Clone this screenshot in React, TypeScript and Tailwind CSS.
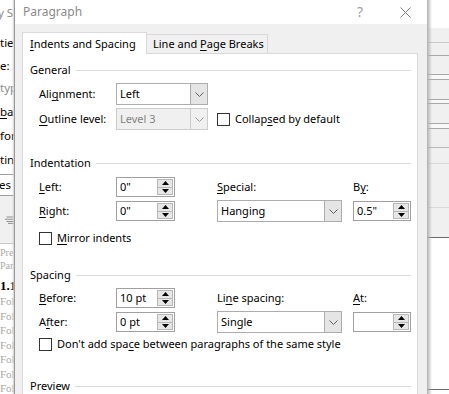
import React from "react";

const U = ({ children }: { children: React.ReactNode }) => (
  <span className="underline underline-offset-[2px] decoration-[1px]">{children}</span>
);

const Chevron = ({ color = "#606060" }: { color?: string }) => (
  <svg width="9" height="5" viewBox="0 0 9 5">
    <polyline points="0.5,0.5 4.5,4.5 8.5,0.5" fill="none" stroke={color} strokeWidth="1" />
  </svg>
);

const Select = ({
  value,
  width,
  disabled = false,
}: {
  value: string;
  width: string;
  disabled?: boolean;
}) => (
  <div
    className={`${width} h-[22px] flex border ${
      disabled ? "border-[#cccccc] bg-[#f0f0f0] text-[#838383]" : "border-[#adadad] bg-white text-black"
    }`}
  >
    <div className="flex-1 flex items-center pl-[3px]">{value}</div>
    <div
      className={`w-[17px] flex items-center justify-center border-l ${
        disabled ? "border-[#cccccc] bg-[#f0f0f0]" : "border-[#adadad] bg-[#e5e5e5]"
      }`}
    >
      <Chevron color={disabled ? "#9a9a9a" : "#606060"} />
    </div>
  </div>
);

const Spin = ({ value, width }: { value: string; width: string }) => (
  <div className={`${width} h-[20px] flex border border-[#a0a0a0] bg-white`}>
    <div className="flex-1 flex items-center pl-[3px]">{value}</div>
    <div className="w-[16px] my-px mr-px flex flex-col border border-[#b8b8b8] bg-[#e6e6e6]">
      <div className="flex-1 flex items-center justify-center border-b border-[#b8b8b8]">
        <svg width="7" height="4" viewBox="0 0 7 4">
          <polygon points="0,4 7,4 3.5,0" fill="#000" />
        </svg>
      </div>
      <div className="flex-1 flex items-center justify-center">
        <svg width="7" height="4" viewBox="0 0 7 4">
          <polygon points="0,0 7,0 3.5,4" fill="#000" />
        </svg>
      </div>
    </div>
  </div>
);

const Check = () => <div className="w-[13px] h-[13px] border border-[#333333] bg-white shrink-0" />;

const Section = ({ title, className }: { title: string; className: string }) => (
  <div className={`flex items-center h-4 ${className}`}>
    <span>{title}</span>
    <div className="flex-1 h-px bg-[#dcdcdc] ml-[5px]" />
  </div>
);

const LeftStrip = () => (
  <div className="w-[15px] shrink-0 h-full relative overflow-hidden bg-white border-r border-[#9a9a9a] text-[11.5px] leading-4 whitespace-nowrap">
    <div className="h-[26px] flex items-center text-[#8a8a8a] -ml-[2px]">y St</div>
    <div className="h-[25px] pt-[9px]">ties</div>
    <div className="h-[23px] pt-[7px]">e:</div>
    <div className="h-[23px] pt-[6px] text-[#8a8a8a]">typ</div>
    <div className="h-[25px] pt-[7px]">
      <U>b</U>a
    </div>
    <div className="h-[24px] pt-[6px]">for</div>
    <div className="h-[24px] pt-[6px]">tin</div>
    <div className="h-[22px] mt-[4px] border-y border-[#a0a0a0] flex items-center -ml-[1px]">es N</div>
    <div className="h-[48px] bg-[#f0f0f0] border-b border-[#c8c8c8] flex items-center text-[#606060]">
      <svg width="12" height="10" viewBox="0 0 12 10" className="ml-[5px]">
        <path d="M2 1h10M0 4h12M2 7h10M4 9.5h8" stroke="#707070" strokeWidth="1" />
      </svg>
    </div>
    <div className="font-['Liberation_Serif',serif] text-[10px] leading-[13px] text-[#a8a8a8] pt-[2px]">
      <div>Prev</div>
      <div>Para</div>
    </div>
    <div className="font-['Liberation_Serif',serif] text-[13px] leading-[16px] font-bold text-black mt-[6px]">1.1.</div>
    <div className="font-['Liberation_Serif',serif] text-[11px] leading-[14.5px] text-[#a8a8a8]">
      <div>Foll</div>
      <div>Foll</div>
      <div>Foll</div>
      <div>Foll</div>
      <div>Foll</div>
      <div>Foll</div>
      <div>Foll</div>
    </div>
    <div className="absolute right-0 top-0 h-full w-[2px] bg-gradient-to-r from-transparent to-[#d0d0d0]" />
  </div>
);

const RightStrip = () => (
  <div className="w-[22px] shrink-0 h-full relative flex flex-col bg-white">
    <div className="h-[28px] bg-white" />
    <div className="h-[209px] bg-[#f0f0f0] flex flex-col">
      <div className="h-[14px]" />
      <div className="h-px bg-[#c8c8c8]" />
      <div className="h-[12px]" />
      <div className="h-px bg-[#a8a8a8]" />
      <div className="h-[18px]" />
      <div className="h-px bg-[#a8a8a8]" />
      <div className="h-[4px] bg-[#f8f8f8]" />
      <div className="h-px bg-[#a8a8a8]" />
      <div className="h-[19px]" />
      <div className="h-px bg-[#a8a8a8]" />
      <div className="h-[3px] bg-[#f8f8f8]" />
      <div className="h-px bg-[#a8a8a8]" />
      <div className="h-[19px]" />
      <div className="h-px bg-[#a8a8a8]" />
      <div className="h-[4px] bg-[#f8f8f8]" />
      <div className="h-px bg-[#a8a8a8]" />
      <div className="h-[18px]" />
      <div className="h-px bg-[#b8b8b8]" />
      <div className="h-[15px]" />
      <div className="h-px bg-[#d8d8d8]" />
      <div className="h-[43px]" />
      <div className="h-px bg-[#d8d8d8]" />
    </div>
    <div className="h-px bg-[#6a6a6a]" />
    <div className="flex-1 bg-white" />
    <div className="h-px bg-[#6a6a6a]" />
    <div className="h-[4px] bg-white" />
    <div className="absolute left-0 top-0 h-full w-[5px] bg-gradient-to-r from-[#b0b0b0] to-transparent" />
  </div>
);

export default function App() {
  return (
    <div className="w-[449px] h-[394px] flex overflow-hidden bg-white font-['Noto_Sans',sans-serif] text-[11px] leading-4 text-black">
      <LeftStrip />
      <div className="w-[412px] shrink-0 h-full flex flex-col bg-[#f0f0f0]">
        <div className="h-[25px] bg-white flex items-center pl-[8px] text-[#8a8a8a] text-[12px]">
          <span>Paragraph</span>
          <span className="ml-[275px] text-[14px] text-[#a0a0a0]">?</span>
          <svg width="11" height="11" viewBox="0 0 11 11" className="ml-[37px]">
            <path d="M0.5 0.5L10.5 10.5M10.5 0.5L0.5 10.5" stroke="#7a7a7a" strokeWidth="1" />
          </svg>
        </div>
        <div className="pl-[7px] pt-[7px] flex-1 flex flex-col">
          <div className="flex items-end h-[22px] whitespace-nowrap">
            <div className="w-[125px] h-[22px] bg-white border-t border-l border-r border-[#d9d9d9] -mb-px relative z-10 pl-[7px] flex items-center">
              <span>
                <U>I</U>ndents and Spacing
              </span>
            </div>
            <div className="w-[121px] h-[19px] bg-[#f0f0f0] border-t border-r border-[#d9d9d9] pl-[6px] flex items-center">
              <span>
                Line and <U>P</U>age Breaks
              </span>
            </div>
          </div>
          <div className="w-[396px] flex-1 bg-white border border-[#d9d9d9] border-b-0 pl-[7px] pr-[6px] flex flex-col whitespace-nowrap">
            <Section title="General" className="mt-[8px]" />
            <div className="flex items-center h-[22px] mt-[5px] pl-[9px]">
              <span className="w-[77px]">
                Ali<U>g</U>nment:
              </span>
              <Select value="Left" width="w-[92px]" />
            </div>
            <div className="flex items-center h-[22px] mt-[3px] pl-[9px]">
              <span className="w-[77px]">
                <U>O</U>utline level:
              </span>
              <Select value="Level 3" width="w-[92px]" disabled />
              <div className="ml-[9px]">
                <Check />
              </div>
              <span className="ml-[5px]">
                Collap<U>s</U>ed by default
              </span>
            </div>

            <Section title="Indentation" className="mt-[25px]" />
            <div className="flex items-center h-[20px] mt-[6px] pl-[9px]">
              <span className="w-[77px]">
                <U>L</U>eft:
              </span>
              <Spin value={'0"'} width="w-[59px]" />
              <span className="ml-[42px] w-[136px]">
                <U>S</U>pecial:
              </span>
              <span>
                B<U>y</U>:
              </span>
            </div>
            <div className="flex items-center h-[22px] mt-[3px] pl-[9px]">
              <span className="w-[77px]">
                <U>R</U>ight:
              </span>
              <Spin value={'0"'} width="w-[59px]" />
              <div className="ml-[42px]">
                <Select value="Hanging" width="w-[125px]" />
              </div>
              <div className="ml-[11px]">
                <Spin value={'0.5"'} width="w-[58px]" />
              </div>
            </div>
            <div className="flex items-center h-[16px] mt-[8px] pl-[9px]">
              <Check />
              <span className="ml-[5px]">
                <U>M</U>irror indents
              </span>
            </div>

            <Section title="Spacing" className="mt-[21px]" />
            <div className="flex items-center h-[20px] mt-[5px] pl-[9px]">
              <span className="w-[77px]">
                <U>B</U>efore:
              </span>
              <Spin value="10 pt" width="w-[59px]" />
              <span className="ml-[42px] w-[136px]">
                Li<U>n</U>e spacing:
              </span>
              <span>
                <U>A</U>t:
              </span>
            </div>
            <div className="flex items-center h-[20px] mt-[4px] pl-[9px]">
              <span className="w-[77px]">
                A<U>f</U>ter:
              </span>
              <Spin value="0 pt" width="w-[59px]" />
              <div className="ml-[42px]">
                <Select value="Single" width="w-[125px]" />
              </div>
              <div className="ml-[11px]">
                <Spin value="" width="w-[58px]" />
              </div>
            </div>
            <div className="flex items-center h-[16px] mt-[4px] pl-[9px]">
              <Check />
              <span className="ml-[5px]">
                Don't add spa<U>c</U>e between paragraphs of the same style
              </span>
            </div>

            <Section title="Preview" className="mt-[26px]" />
          </div>
        </div>
      </div>
      <RightStrip />
    </div>
  );
}
